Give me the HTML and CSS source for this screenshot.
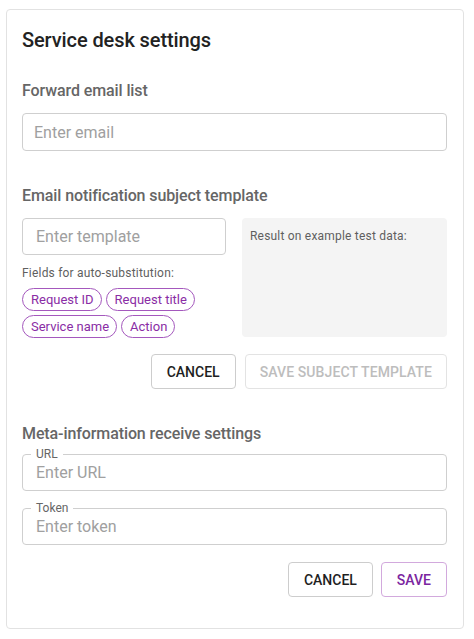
FILE: index.html
```html
<!DOCTYPE html>
<html lang="en">
<head>
<meta charset="utf-8">
<title>Service desk settings</title>
<link rel="stylesheet" href="styles.css">
</head>
<body>
<div class="card">
  <h1 class="title">Service desk settings</h1>

  <div class="section-label first">Forward email list</div>
  <div class="input email"><span class="ph">Enter email</span></div>

  <div class="section-label">Email notification subject template</div>
  <div class="template-grid">
    <div class="template-left">
      <div class="input template"><span class="ph">Enter template</span></div>
      <div class="caption">Fields for auto-substitution:</div>
      <div class="chips">
        <span class="chip">Request ID</span>
        <span class="chip">Request title</span>
        <span class="chip">Service name</span>
        <span class="chip">Action</span>
      </div>
    </div>
    <div class="result">
      <div class="caption">Result on example test data:</div>
    </div>
  </div>
  <div class="actions first-actions">
    <button class="btn">CANCEL</button>
    <button class="btn disabled">SAVE SUBJECT TEMPLATE</button>
  </div>

  <div class="section-label">Meta-information receive settings</div>
  <div class="outlined url">
    <span class="legend">URL</span>
    <span class="ph">Enter URL</span>
  </div>
  <div class="outlined token">
    <span class="legend">Token</span>
    <span class="ph">Enter token</span>
  </div>
  <div class="actions last-actions">
    <button class="btn">CANCEL</button>
    <button class="btn primary">SAVE</button>
  </div>
</div>
</body>
</html>
```
FILE: styles.css
```css
* { box-sizing: border-box; }
html, body { margin: 0; padding: 0; background: #fff; }
body {
  padding: 9px 0 0 6px;
  font-family: Roboto, "Liberation Sans", Arial, sans-serif;
  color: #212121;
}
.card {
  width: 458px;
  height: 620px;
  border: 1px solid #e2e2e2;
  border-radius: 4px;
  padding: 16px 16px 0 15px;
}
.title {
  margin: 0;
  font-size: 20px;
  line-height: 28px;
  font-weight: 500;
  letter-spacing: -0.1px;
  color: #222;
}
.section-label {
  margin-top: 33px;
  font-size: 16px;
  line-height: 24px;
  font-weight: 500;
  letter-spacing: -0.1px;
  color: #666;
}
.section-label.first { margin-top: 25px; }
.input {
  margin-top: 10px;
  height: 38px;
  border: 1px solid #cfcfcf;
  border-radius: 4px;
  display: flex;
  align-items: center;
  padding-left: 11px;
}
.input.template { height: 37px; padding-left: 13px; margin-top: 0; }
.ph {
  font-size: 16px;
  color: #a0a0a0;
}
.template-grid {
  margin-top: 10px;
  display: grid;
  grid-template-columns: 204px 205px;
  column-gap: 16px;
}
.template-left { display: flex; flex-direction: column; }
.caption {
  font-size: 12px;
  line-height: 16px;
  letter-spacing: 0.2px;
  color: #5f5f5f;
}
.template-left .caption { margin-top: 10px; }
.chips {
  margin-top: 7px;
  display: flex;
  flex-wrap: wrap;
  gap: 4px 4px;
}
.chip {
  height: 23px;
  display: inline-flex;
  align-items: center;
  padding: 0 7px 0 8px;
  border: 1px solid #a458bd;
  border-radius: 12px;
  font-size: 13px;
  color: #8a2da5;
}
.result {
  background: #f4f4f4;
  border-radius: 4px;
  height: 119px;
  padding: 10px 8px;
}
.actions {
  display: flex;
  justify-content: flex-end;
  gap: 9px;
}
.first-actions { margin-top: 16px; }
.last-actions { margin-top: 17px; gap: 8px; }
.btn {
  height: 35px;
  padding: 0 15px;
  background: #fff;
  border: 1px solid #cdcdcd;
  border-radius: 4px;
  font-family: Roboto, "Liberation Sans", Arial, sans-serif;
  font-size: 14px;
  font-weight: 500;
  letter-spacing: 0;
  color: #1f1f1f;
}
.btn.disabled {
  color: #bdbdbd;
  border-color: #e3e3e3;
  padding: 0 14px;
  letter-spacing: 0.1px;
}
.btn.primary {
  color: #7b26a0;
  border-color: #d2a9dd;
}
.outlined {
  position: relative;
  height: 37px;
  border: 1px solid #cfcfcf;
  border-radius: 4px;
  display: flex;
  align-items: center;
  padding-left: 13px;
}
.outlined.url { margin-top: 8px; }
.outlined.token { margin-top: 17px; }
.legend {
  position: absolute;
  top: -9px;
  left: 8px;
  padding: 0 5px;
  background: #fff;
  font-size: 12px;
  line-height: 16px;
  color: #666;
}
```
